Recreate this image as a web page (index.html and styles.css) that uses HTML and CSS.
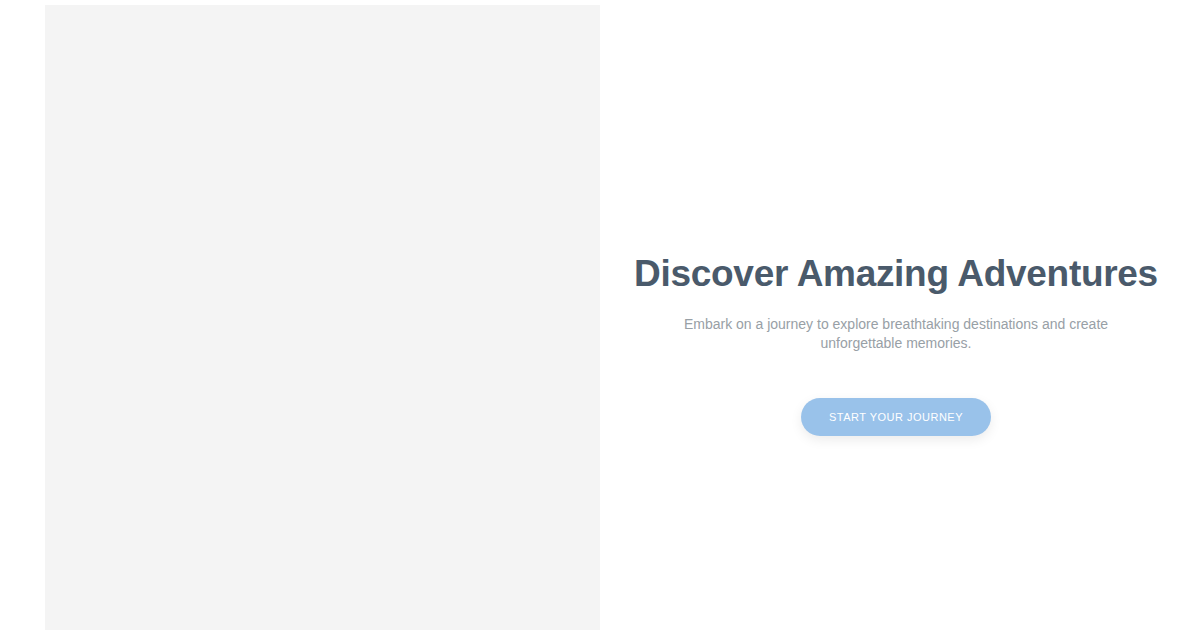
FILE: index.html
```html
<!DOCTYPE html>
<html lang="en">
<head>
<meta charset="utf-8">
<title>Discover Amazing Adventures</title>
<link rel="stylesheet" href="styles.css">
</head>
<body>
<section class="hero">
  <div class="hero-media"></div>
  <div class="hero-content">
    <h1 class="hero-title">Discover Amazing Adventures</h1>
    <p class="hero-text">Embark on a journey to explore breathtaking destinations and create unforgettable memories.</p>
    <a class="hero-button" href="#">Start Your Journey</a>
  </div>
</section>
</body>
</html>
```
FILE: styles.css
```css
html, body {
  margin: 0;
  padding: 0;
  background: #ffffff;
  overflow: hidden;
}

body {
  font-family: "Liberation Sans", Arial, sans-serif;
}

.hero {
  display: grid;
  grid-template-columns: 555px 1fr;
  height: 690px;
  padding: 5px 8px 0 45px;
}

.hero-media {
  background: #f4f4f4;
}

.hero-content {
  display: flex;
  flex-direction: column;
  align-items: center;
  justify-content: center;
  text-align: center;
  padding-bottom: 14px;
}

.hero-title {
  margin: 0;
  font-size: 37px;
  line-height: 46px;
  font-weight: 700;
  color: #4a5a6b;
  letter-spacing: -0.3px;
}

.hero-text {
  margin: 18px 0 0;
  max-width: 440px;
  font-size: 14px;
  line-height: 19px;
  color: #98a0a6;
}

.hero-button {
  margin-top: 45px;
  display: inline-block;
  padding: 0 28px;
  height: 38px;
  line-height: 38px;
  border-radius: 19px;
  background: #99c2ea;
  color: #ffffff;
  font-size: 11px;
  letter-spacing: 0.5px;
  text-transform: uppercase;
  text-decoration: none;
  box-shadow: 0 4px 12px rgba(0, 0, 0, 0.08);
}
```
